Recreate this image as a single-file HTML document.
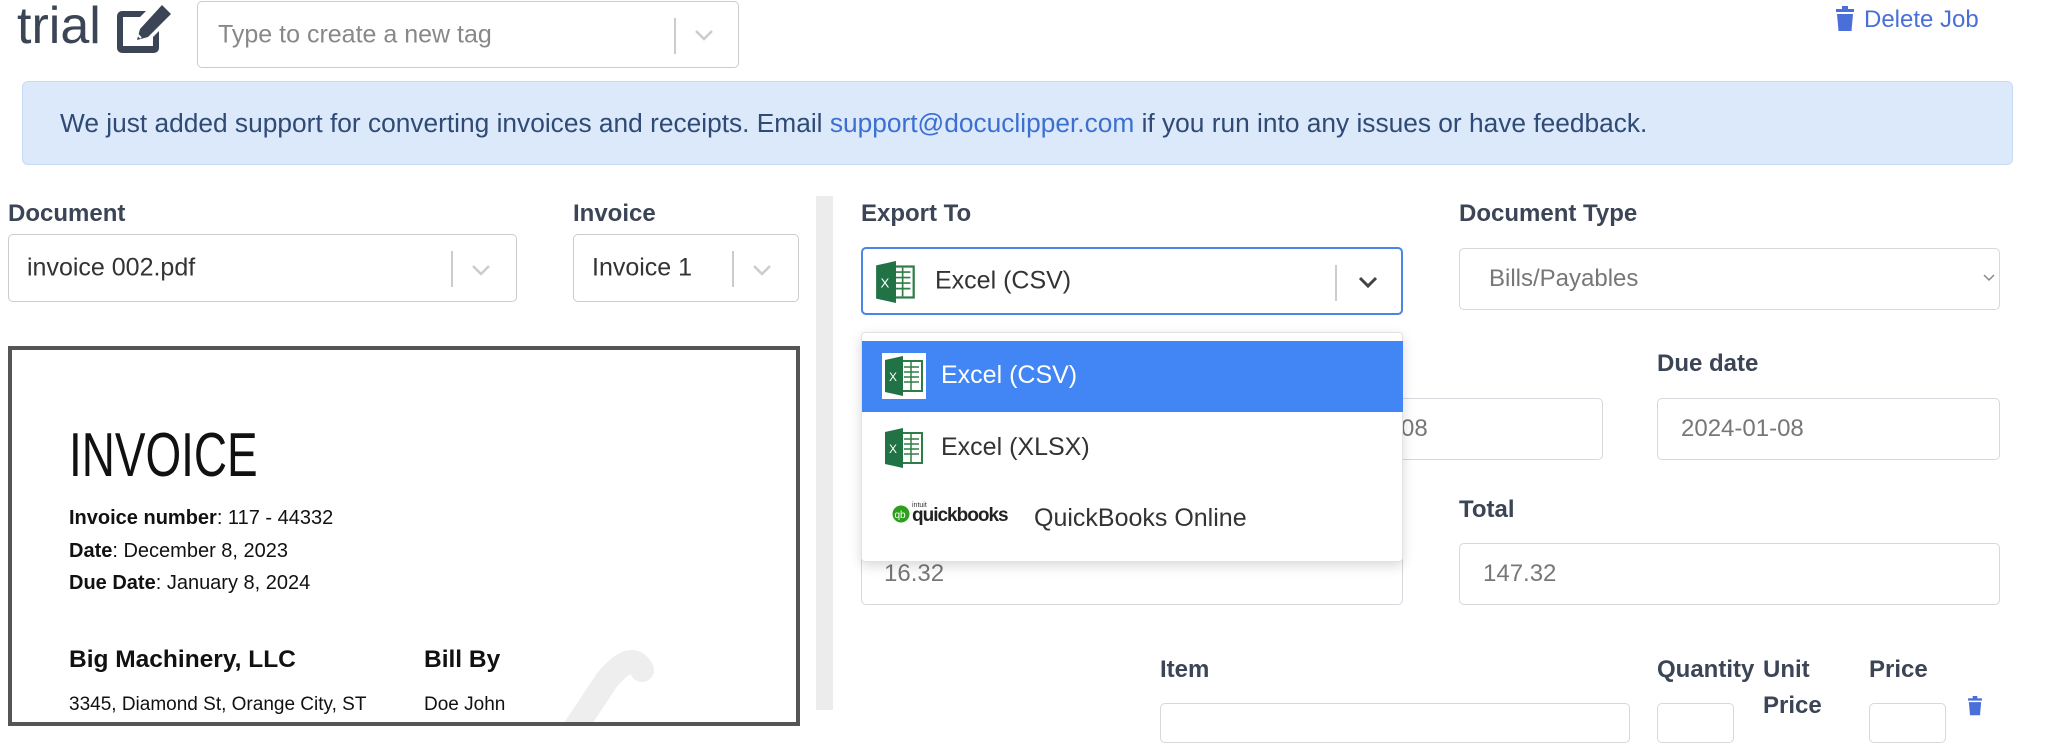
<!DOCTYPE html>
<html><head><meta charset="utf-8"><style>
*{box-sizing:border-box;margin:0;padding:0}
body{width:2048px;height:710px;overflow:hidden;background:#fff;font-family:"Liberation Sans",sans-serif;color:#3b4556;position:relative}
.a{position:absolute}
.lbl{position:absolute;font-weight:bold;font-size:24px;color:#3b4556}
.sel{position:absolute;border:1.5px solid #ccc;border-radius:5px;background:#fff}
.sel .t{position:absolute;top:50%;transform:translateY(-50%);font-size:25px;color:#333}
.div{position:absolute;width:1.5px;background:#ccc}
.inp{position:absolute;border:1.5px solid #d5d8dd;border-radius:5px;background:#fff;font-size:24px;color:#777}
.inp span{position:absolute;top:50%;transform:translateY(-50%)}
.doc{font-family:"Liberation Sans Narrow","Liberation Sans",sans-serif;color:#111;transform-origin:left top;white-space:nowrap}
</style></head><body>

<div class="a" style="left:17px;top:-4px;font-size:52px;color:#3b4556">trial</div>
<svg class="a" style="left:114px;top:3px" width="62" height="52" viewBox="0 0 62 52">
<path d="M32 8H8a5 5 0 0 0-5 5v32a5 5 0 0 0 5 5h32a5 5 0 0 0 5-5V28l-6 6v9H9V14h17z" fill="#3b4556"/>
<path d="M48 2l9 9-23 23-11 3 3-11z" fill="#3b4556"/>
<path d="M22 30l5 5" stroke="#fff" stroke-width="2"/>
</svg>

<div class="sel" style="left:197px;top:1px;width:542px;height:67px">
<div class="t" style="left:20px;color:#888">Type to create a new tag</div>
<div class="div" style="left:476px;top:16px;height:36px"></div>
<svg class="a" style="left:496px;top:26px" width="20" height="14"><path d="M2 3l8 8 8-8" stroke="#ccc" stroke-width="2.5" fill="none"/></svg>
</div>

<svg class="a" style="left:1835px;top:6px" width="20" height="26" viewBox="0 0 20 26"><rect x="1" y="3" width="18" height="3" fill="#4a6fd8"/><rect x="7" y="0" width="6" height="4" fill="#4a6fd8"/><path d="M2 8h16l-1.5 17h-13z" fill="#4a6fd8"/></svg>
<div class="a" style="left:1864px;top:6px;font-size:24px;color:#4a6fd8">Delete Job</div>

<div class="a" style="left:22px;top:81px;width:1991px;height:84px;background:#dbe9fb;border:1.5px solid #c5dbf6;border-radius:6px"></div>
<div class="a" style="left:60px;top:108px;font-size:26.3px;color:#2f4a74;white-space:nowrap">We just added support for converting invoices and receipts. Email <span style="color:#3b6fd1">support@docuclipper.com</span> if you run into any issues or have feedback.</div>

<div class="lbl" style="left:8px;top:200px">Document</div>
<div class="sel" style="left:8px;top:234px;width:509px;height:68px">
<div class="t" style="left:18px">invoice 002.pdf</div>
<div class="div" style="left:442px;top:16px;height:36px"></div>
<svg class="a" style="left:462px;top:28px" width="20" height="14"><path d="M2 3l8 8 8-8" stroke="#ccc" stroke-width="2.5" fill="none"/></svg>
</div>
<div class="lbl" style="left:573px;top:200px">Invoice</div>
<div class="sel" style="left:573px;top:234px;width:226px;height:68px">
<div class="t" style="left:18px">Invoice 1</div>
<div class="div" style="left:158px;top:16px;height:36px"></div>
<svg class="a" style="left:178px;top:28px" width="20" height="14"><path d="M2 3l8 8 8-8" stroke="#ccc" stroke-width="2.5" fill="none"/></svg>
</div>

<div class="a" style="left:816px;top:196px;width:17px;height:514px;background:#ececec"></div>

<div class="a" style="left:8px;top:346px;width:792px;height:380px;border:4px solid #555;background:#fff;overflow:hidden">
<svg class="a" style="left:495px;top:300px" width="160" height="120"><path d="M135 20 Q125 0 100 30 L40 120" stroke="#eee" stroke-width="24" fill="none" stroke-linecap="round"/></svg>
<div class="a doc" style="left:57px;top:70px;font-size:62px;transform:scaleX(0.74)">INVOICE</div>
<div class="a doc" style="left:57px;top:152px;font-size:20px;line-height:32.5px"><b>Invoice number</b>: 117 - 44332<br><b>Date</b>: December 8, 2023<br><b>Due Date</b>: January 8, 2024</div>
<div class="a doc" style="left:57px;top:296px;font-size:24.5px;font-weight:bold">Big Machinery, LLC</div>
<div class="a doc" style="left:412px;top:296px;font-size:24.5px;font-weight:bold">Bill By</div>
<div class="a doc" style="left:57px;top:344px;font-size:19px">3345, Diamond St, Orange City, ST</div>
<div class="a doc" style="left:412px;top:344px;font-size:19px">Doe John</div>
</div>

<div class="lbl" style="left:861px;top:200px">Export To</div>
<div class="lbl" style="left:1459px;top:200px">Document Type</div>

<div class="inp" style="left:1300px;top:398px;width:303px;height:62px"><span style="left:100px">08</span></div>
<div class="lbl" style="left:1657px;top:350px">Due date</div>
<div class="inp" style="left:1657px;top:398px;width:343px;height:62px"><span style="left:23px">2024-01-08</span></div>
<div class="lbl" style="left:1459px;top:496px">Total</div>
<div class="inp" style="left:1459px;top:543px;width:541px;height:62px"><span style="left:23px">147.32</span></div>
<div class="inp" style="left:861px;top:543px;width:542px;height:62px"><span style="left:22px">16.32</span></div>

<div class="lbl" style="left:1160px;top:656px">Item</div>
<div class="lbl" style="left:1657px;top:656px">Quantity</div>
<div class="lbl" style="left:1763px;top:656px">Unit</div>
<div class="lbl" style="left:1763px;top:692px">Price</div>
<div class="lbl" style="left:1869px;top:656px">Price</div>
<div class="inp" style="left:1160px;top:703px;width:470px;height:40px"></div>
<div class="inp" style="left:1657px;top:703px;width:77px;height:40px"></div>
<div class="inp" style="left:1869px;top:703px;width:77px;height:40px"></div>
<svg class="a" style="left:1966px;top:696px" width="18" height="20" viewBox="0 0 20 26"><rect x="1" y="3" width="18" height="3" fill="#4a6fd8"/><rect x="7" y="0" width="6" height="4" fill="#4a6fd8"/><path d="M2 8h16l-1.5 17h-13z" fill="#4a6fd8"/></svg>

<div class="sel" style="left:1459px;top:248px;width:541px;height:62px;border-color:#d5d8dd">
<div class="t" style="left:29px;font-size:24px;color:#777">Bills/Payables</div>
<svg class="a" style="left:523px;top:24px" width="12" height="10"><path d="M1 2l5 5 5-5" stroke="#888" stroke-width="1.5" fill="none"/></svg>
</div>

<div class="a" style="left:861px;top:247px;width:542px;height:68px;border:2.5px solid #4a86e8;border-radius:5px;background:#fff">
<svg class="a" style="left:13px;top:12px" width="40" height="42" viewBox="0 0 36 38"><rect x="14" y="5" width="20" height="28" fill="#fff" stroke="#2e7d46" stroke-width="2"/><path d="M18 10h13M18 15h13M18 20h13M18 25h13M24 6v26" stroke="#2e7d46" stroke-width="1.5"/><path d="M0 4l18-4v38L0 34z" fill="#217346"/><text x="4" y="24" font-size="12" fill="#fff" font-family="Liberation Sans">X</text></svg>
<div class="a" style="left:72px;top:50%;transform:translateY(-50%);font-size:25px;color:#333">Excel (CSV)</div>
<div class="div" style="left:472px;top:16px;height:36px"></div>
<svg class="a" style="left:494px;top:26px" width="22" height="14"><path d="M3 3l8 8 8-8" stroke="#444" stroke-width="3" fill="none"/></svg>
</div>

<div class="a" style="left:861px;top:332px;width:542px;height:230px;background:#fff;border:1px solid #e2e2e2;border-radius:4px;box-shadow:0 4px 12px rgba(0,0,0,.15)">
<div class="a" style="left:0;top:8px;width:541px;height:71px;background:#4285f4"></div>
<svg class="a" style="left:20px;top:20px" width="44" height="46" viewBox="0 0 44 46"><rect width="44" height="46" fill="#fff"/><rect x="18" y="8" width="22" height="30" fill="#fff" stroke="#2e7d46" stroke-width="2"/><path d="M22 14h15M22 19h15M22 24h15M22 29h15M29 9v28" stroke="#2e7d46" stroke-width="1.5"/><path d="M3 7l18-4v40l-18-4z" fill="#217346"/><text x="7" y="28" font-size="12" fill="#fff" font-family="Liberation Sans">X</text></svg>
<div class="a" style="left:79px;top:28px;font-size:25px;color:#fff">Excel (CSV)</div>
<svg class="a" style="left:20px;top:92px" width="44" height="46" viewBox="0 0 44 46"><rect x="18" y="8" width="22" height="30" fill="#fff" stroke="#2e7d46" stroke-width="2"/><path d="M22 14h15M22 19h15M22 24h15M22 29h15M29 9v28" stroke="#2e7d46" stroke-width="1.5"/><path d="M3 7l18-4v40l-18-4z" fill="#217346"/><text x="7" y="28" font-size="12" fill="#fff" font-family="Liberation Sans">X</text></svg>
<div class="a" style="left:79px;top:100px;font-size:25px;color:#333">Excel (XLSX)</div>
<svg class="a" style="left:30px;top:172px" width="18" height="18"><circle cx="9" cy="9" r="8.5" fill="#2ca01c"/><text x="2.5" y="13" font-size="10" fill="#fff" font-family="Liberation Sans">qb</text></svg>
<div class="a" style="left:50px;top:169px;font-size:7px;color:#333">intuit</div>
<div class="a" style="left:50px;top:172px;font-size:19px;font-weight:bold;color:#222;letter-spacing:-1px">quickbooks</div>
<div class="a" style="left:172px;top:171px;font-size:25px;color:#333">QuickBooks Online</div>
</div>

</body></html>
